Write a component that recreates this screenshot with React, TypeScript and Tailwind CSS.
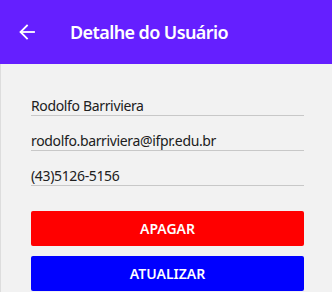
import React from "react";

export default function App() {
  const font = { fontFamily: '"Segoe UI", "Noto Sans", "Open Sans", sans-serif' };
  return (
    <div className="w-[332px] h-[292px] bg-[#f2f2f2] overflow-hidden" style={font}>
      <div className="h-[64px] bg-[#651fff] flex items-center text-white">
        <div className="w-[70px] flex items-center pl-[19px]">
          <svg width="16" height="16" viewBox="0 0 16 16" fill="none" stroke="white" strokeWidth="1.8" strokeLinecap="square">
            <path d="M2 8H15" />
            <path d="M8 1.5L1.5 8L8 14.5" />
          </svg>
        </div>
        <div className="text-[18px] font-semibold leading-none tracking-[-0.6px]">Detalhe do Usuário</div>
      </div>
      <div className="border-l border-[#dddddd] h-full">
        <div className="pl-[30px] pr-[28px] pt-[27px] flex flex-col gap-[10px]">
          {["Rodolfo Barriviera", "rodolfo.barriviera@ifpr.edu.br", "(43)5126-5156"].map((t) => (
            <div key={t} className="h-[25px] border-b border-[#c8c8c8] flex items-end pb-[2px] text-[14px] leading-none text-[#202020] tracking-[-0.35px]">
              {t}
            </div>
          ))}
          <div className="mt-[15px] flex flex-col gap-[10px]">
            <div className="h-[35px] bg-[#ff0000] rounded-[2px] flex items-center justify-center text-white font-semibold text-[14px]">
              APAGAR
            </div>
            <div className="h-[35px] bg-[#0000ff] rounded-[2px] flex items-center justify-center text-white font-semibold text-[14px]">
              ATUALIZAR
            </div>
          </div>
        </div>
      </div>
    </div>
  );
}
